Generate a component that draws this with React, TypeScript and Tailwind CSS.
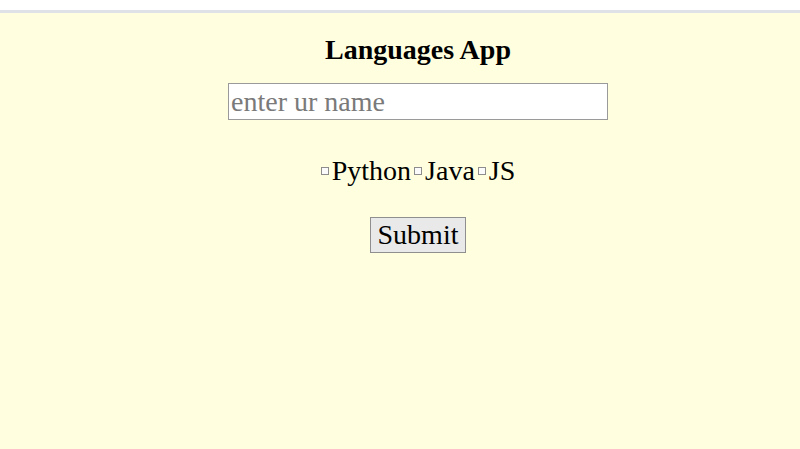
import React from 'react';

const serif = { fontFamily: '"Liberation Serif", "DejaVu Serif", serif' };

const Box = () => (
    <span className="mb-[5px] mr-[3px] inline-block h-[8px] w-[8px] border border-[#8d8d8d] bg-[#fbfbfb]" />
);

export default function App() {
    const languages = ['Python', 'Java', 'JS'];

    return (
        <div className="flex min-h-[449px] flex-col bg-[#ffffdf]" style={serif}>
            <div className="h-[13px] shrink-0 border-b-[3px] border-[#dfe2e7] bg-white" />
            <div className="flex flex-col items-center pl-[36px] text-black">
                <h1 className="mt-[21px] text-[28px] font-bold leading-[32px]">Languages App</h1>
                <input
                    type="text"
                    placeholder="enter ur name"
                    className="mt-[17px] h-[37px] w-[380px] border border-[#9a9a9a] bg-white px-[2px] text-[28px] placeholder:text-[#7a7a7a] focus:outline-none"
                />
                <div className="mt-[35px] text-[28px] leading-[32px]">
                    {languages.map((lang, i) => (
                        <span key={lang} className={i > 0 ? 'ml-[3px]' : ''}>
                            <Box />
                            {lang}
                        </span>
                    ))}
                </div>
                <button
                    type="button"
                    className="mt-[30px] h-[36px] w-[96px] border border-[#8f8f8f] bg-[#e9e9e9] text-[28px] leading-none"
                >
                    Submit
                </button>
            </div>
        </div>
    );
}
